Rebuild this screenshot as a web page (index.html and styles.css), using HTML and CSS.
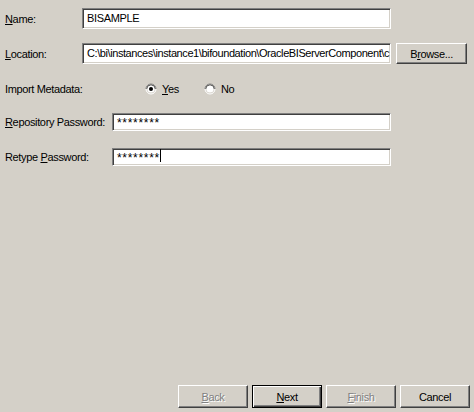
FILE: index.html
```html
<!DOCTYPE html>
<html lang="en">
<head>
  <meta charset="UTF-8">
  <title>Create Repository</title>
  <link rel="stylesheet" href="styles.css">
</head>
<body>
  <div class="wizard">
    <div class="form">
      <div class="row row-name">
        <span class="label"><u>N</u>ame:</span>
        <div class="field wide">BISAMPLE</div>
      </div>
      <div class="row row-location">
        <span class="label"><u>L</u>ocation:</span>
        <div class="field wide path">C:\bi\instances\instance1\bifoundation\OracleBIServerComponent\c</div>
        <button class="btn browse">B<u>r</u>owse...</button>
      </div>
      <div class="row row-import">
        <span class="label label-import">Import Metadata:</span>
        <span class="radio">
          <svg width="12" height="12" viewBox="0 0 12 12">
            <path d="M11 6A5 5 0 0 0 1 6" fill="none" stroke="#808080"/>
            <path d="M10 6A4 4 0 0 0 2 6" fill="none" stroke="#404040"/>
            <path d="M1 6A5 5 0 0 0 11 6" fill="none" stroke="#fff"/>
            <circle cx="6" cy="6" r="3.6" fill="#fff"/>
            <circle cx="6" cy="6" r="2" fill="#000"/>
          </svg>
          <span><u>Y</u>es</span>
        </span>
        <span class="radio">
          <svg width="12" height="12" viewBox="0 0 12 12">
            <path d="M11 6A5 5 0 0 0 1 6" fill="none" stroke="#808080"/>
            <path d="M10 6A4 4 0 0 0 2 6" fill="none" stroke="#404040"/>
            <path d="M1 6A5 5 0 0 0 11 6" fill="none" stroke="#fff"/>
            <circle cx="6" cy="6" r="3.6" fill="#fff"/>
          </svg>
          <span>No</span>
        </span>
      </div>
      <div class="row row-repo">
        <span class="label label-pass"><u>R</u>epository Password:</span>
        <div class="field narrow short"><span class="mask">********</span></div>
      </div>
      <div class="row row-retype">
        <span class="label label-pass">Retype <u>P</u>assword:</span>
        <div class="field narrow short"><span class="mask">********</span><span class="caret"></span></div>
      </div>
    </div>

    <div class="buttons">
      <button class="btn disabled"><u>B</u>ack</button>
      <button class="btn default"><u>N</u>ext</button>
      <button class="btn disabled"><u>F</u>inish</button>
      <button class="btn">Cancel</button>
    </div>
  </div>
</body>
</html>
```

FILE: styles.css
```css
body {
  margin: 0;
  background: #d4d0c8;
  font-family: "Liberation Sans", Arial, sans-serif;
  font-size: 11px;
  letter-spacing: -0.35px;
  color: #000;
}
u {
  text-decoration: underline;
  text-underline-offset: 1px;
}
.wizard {
  width: 474px;
  height: 412px;
  display: flex;
  flex-direction: column;
  box-sizing: border-box;
  padding: 8px 4px 4px 5px;
}
.form {
  display: flex;
  flex-direction: column;
}
.row {
  display: flex;
  align-items: center;
}
.row-location { margin-top: 14px; }
.row-import { margin-top: 16px; height: 18px; }
.row-repo { margin-top: 15px; }
.row-retype { margin-top: 17px; }

.label {
  width: 77px;
  flex: none;
  white-space: nowrap;
}
.label-import { width: 140px; }
.label-pass { width: 107px; }

/* sunken edit box */
.field {
  box-sizing: border-box;
  flex: none;
  height: 21px;
  background: #fff;
  border-top: 1px solid #808080;
  border-left: 1px solid #808080;
  border-bottom: 1px solid #fff;
  border-right: 1px solid #fff;
  box-shadow: inset 1px 1px 0 #404040, inset -1px -1px 0 #d4d0c8;
  padding: 0 2px 0 4px;
  line-height: 18px;
  white-space: nowrap;
  overflow: hidden;
}
.path { letter-spacing: -0.42px; }
.wide { width: 309px; }
.narrow { width: 279px; }
.short { height: 18px; line-height: 15px; }
.mask {
  font-size: 12px;
  letter-spacing: 0.7px;
  vertical-align: -2px;
}
.caret {
  display: inline-block;
  width: 1px;
  height: 13px;
  background: #000;
  vertical-align: -2px;
}

.radio {
  display: flex;
  align-items: center;
  gap: 5px;
  margin-right: 25px;
}
.radio svg { display: block; }

/* raised push button */
.btn {
  box-sizing: border-box;
  font: inherit;
  letter-spacing: inherit;
  color: #000;
  background: #d4d0c8;
  border-top: 1px solid #fff;
  border-left: 1px solid #fff;
  border-bottom: 1px solid #404040;
  border-right: 1px solid #404040;
  box-shadow: inset -1px -1px 0 #808080;
  padding: 0;
  width: 70px;
  height: 23px;
}
.browse {
  flex: none;
  width: 71px;
  height: 21px;
  margin-left: 5px;
}
.btn.default {
  border: 1px solid #000;
  box-shadow: inset 1px 1px 0 #fff, inset -1px -1px 0 #404040, inset -2px -2px 0 #808080;
}
.btn.disabled {
  color: #808080;
  text-shadow: 1px 1px 0 #fff;
}
.buttons {
  margin-top: auto;
  display: flex;
  justify-content: flex-end;
  gap: 4px;
}
```
